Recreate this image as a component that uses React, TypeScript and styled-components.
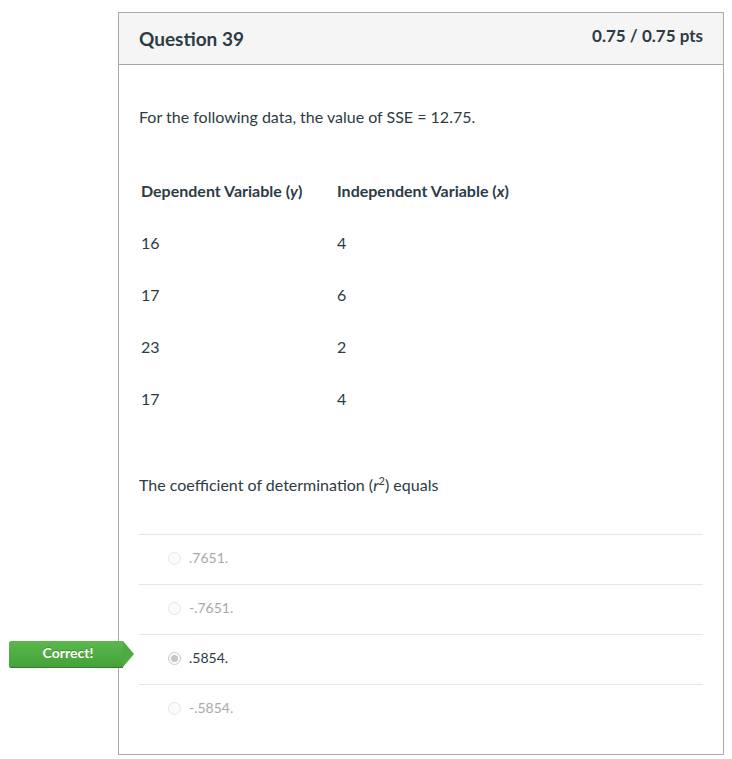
import React from "react";
import styled, { createGlobalStyle } from "styled-components";

const Global = createGlobalStyle`
  html, body { margin: 0; padding: 0; background: #fff; }
  body { font-family: Lato, "Open Sans", sans-serif; color: #2d3b45; }
`;

const Page = styled.div`
  padding: 12px 8px 0 118px;
  width: 606px;
`;

const Card = styled.div`
  position: relative;
  border: 1px solid #aaaaaa;
  box-sizing: border-box;
  width: 606px;
`;

const Header = styled.div`
  display: flex;
  justify-content: space-between;
  align-items: flex-start;
  height: 52px;
  box-sizing: border-box;
  background: #f5f5f5;
  border-bottom: 1px solid #aaaaaa;
  padding: 0 20px;
`;

const Title = styled.h2`
  margin: 15px 0 0;
  font-size: 19px;
  line-height: 22px;
  font-weight: 700;
  color: #2d3b45;
`;

const Points = styled.div`
  margin-top: 12px;
  font-size: 17px;
  line-height: 22px;
  font-weight: 700;
  color: #2d3b45;
`;

const Body = styled.div`
  padding: 40px 20px 20px;
  font-size: 16px;
  line-height: 24px;
`;

const Para = styled.p`
  margin: 0;
`;

const Table = styled.table`
  border-collapse: collapse;
  margin-top: 50px;
  margin-bottom: 62px;
`;

const Th = styled.th<{ $w?: number }>`
  text-align: left;
  font-weight: 700;
  padding: 0 2px;
  height: 24px;
  line-height: 24px;
  width: ${(p) => (p.$w ? `${p.$w}px` : "auto")};
`;

const Td = styled.td`
  padding: 28px 2px 0;
  line-height: 24px;
`;

const Answers = styled.div`
  margin-top: 37px;
`;

const Answer = styled.div<{ $selected?: boolean }>`
  display: flex;
  align-items: center;
  height: 50px;
  border-top: 1px solid #e6e6e6;
  box-sizing: border-box;
  padding: 0 0 3px 29px;
  color: ${(p) => (p.$selected ? "#2d3b45" : "#a9a9a9")};
  font-size: 14px;
  position: relative;
`;

const Radio = styled.span<{ $checked?: boolean }>`
  width: 13px;
  height: 13px;
  border-radius: 50%;
  box-sizing: border-box;
  border: 1px solid ${(p) => (p.$checked ? "#c8c8c8" : "#e6e6e6")};
  background: #fbfbfb;
  margin-right: 8px;
  display: flex;
  align-items: center;
  justify-content: center;
  &::after {
    content: "";
    display: ${(p) => (p.$checked ? "block" : "none")};
    width: 7px;
    height: 7px;
    border-radius: 50%;
    background: #c6c6c6;
  }
`;

const Badge = styled.div`
  position: absolute;
  left: -130px;
  top: 6px;
  width: 114px;
  height: 27px;
  box-sizing: border-box;
  padding: 0 0 2px 4px;
  background: linear-gradient(#5bb84c, #44a23a);
  border-bottom: 1px solid #2e7f27;
  border-radius: 2px 0 0 2px;
  color: #fff;
  font-weight: 700;
  font-size: 14px;
  display: flex;
  align-items: center;
  justify-content: center;
  text-shadow: 0 -1px 0 rgba(0, 0, 0, 0.2);
  &::after {
    content: "";
    position: absolute;
    right: -11px;
    top: 0;
    border-top: 13px solid transparent;
    border-bottom: 13px solid transparent;
    border-left: 11px solid #4dab42;
  }
`;

const Sup = styled.sup`
  font-size: 11px;
  line-height: 0;
`;

const rows = [
  ["16", "4"],
  ["17", "6"],
  ["23", "2"],
  ["17", "4"],
];

const answers = [
  { t: ".7651." },
  { t: "-.7651." },
  { t: ".5854.", sel: true },
  { t: "-.5854." },
];

export default function App() {
  return (
    <>
      <Global />
      <Page>
        <Card>
          <Header>
            <Title>Question 39</Title>
            <Points>0.75 / 0.75 pts</Points>
          </Header>
          <Body>
            <Para>For the following data, the value of SSE = 12.75.</Para>
            <Table>
              <thead>
                <tr>
                  <Th $w={192}>
                    Dependent Variable (<i>y</i>)
                  </Th>
                  <Th>
                    Independent Variable (<i>x</i>)
                  </Th>
                </tr>
              </thead>
              <tbody>
                {rows.map((r, i) => (
                  <tr key={i}>
                    <Td>{r[0]}</Td>
                    <Td>{r[1]}</Td>
                  </tr>
                ))}
              </tbody>
            </Table>
            <Para>
              The coefficient of determination (<i>r</i>
              <Sup>2</Sup>) equals
            </Para>
            <Answers>
              {answers.map((a, i) => (
                <Answer key={i} $selected={a.sel}>
                  {a.sel && <Badge>Correct!</Badge>}
                  <Radio $checked={a.sel} />
                  {a.t}
                </Answer>
              ))}
            </Answers>
          </Body>
        </Card>
      </Page>
    </>
  );
}
